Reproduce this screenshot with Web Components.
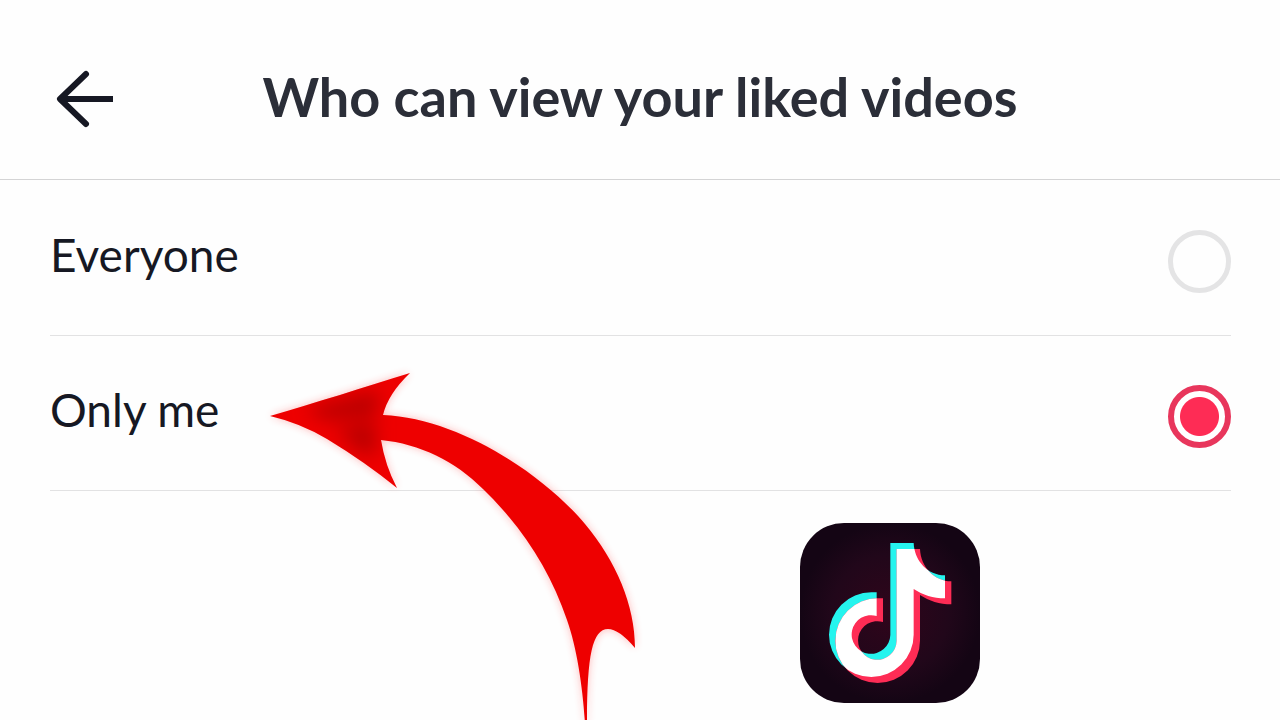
<!DOCTYPE html>
<html lang="en">
<head>
<meta charset="utf-8">
<meta name="viewport" content="width=device-width, initial-scale=1">
<title>Who can view your liked videos</title>
<style>
body { margin: 0; background: #fefefe; color: #161823; font-family: Lato, "Open Sans", sans-serif; }
</style>
</head>
<body>
<privacy-page></privacy-page>
<script>
const define = (name, html) => customElements.define(name, class extends HTMLElement {
  constructor() {
    super();
    this.attachShadow({ mode: 'open' }).innerHTML = html;
  }
});

define('page-header', `
  <style>
    :host { display: block; border-bottom: 1px solid #d4d4d5; }
    header { display: grid; grid-template-columns: 1fr auto 1fr; align-items: center; min-height: 179px; padding: 18px 50px 0; box-sizing: border-box; }
    button { width: 72px; height: 72px; padding: 0; border: 0; background: none; color: #161823; cursor: pointer; }
    svg { display: block; }
    h1 { margin: 0; padding-bottom: 4px; font-size: 54px; line-height: 64px; font-weight: 700; color: #2b2e38; }
  </style>
  <header>
    <button type="button" aria-label="Back">
      <svg width="72" height="72" viewBox="50 63 72 72" fill="none" stroke="currentColor" stroke-width="6" stroke-linecap="round" stroke-linejoin="round"><path d="M86 74 60 99 86 124"/><path d="M60 99H113" stroke-linecap="butt"/></svg>
    </button>
    <h1><slot></slot></h1>
  </header>`);

define('option-row', `
  <style>
    :host { display: flex; align-items: center; justify-content: space-between; box-sizing: border-box; min-height: 155px; padding-top: 6px; border-bottom: 1px solid #e2e2e3; }
  </style>
  <slot name="label"></slot>
  <slot name="control"></slot>`);

define('view-options', `
  <style>
    :host { display: block; padding: 1px 49px 0 50px; }
    fieldset { margin: 0; padding: 0; border: 0; min-width: 0; }
    label { flex: 1; padding-bottom: 12px; font-size: 46px; line-height: 56px; }
    input { appearance: none; flex: none; box-sizing: border-box; width: 63px; height: 63px; margin: 0; border: 5px solid #e4e4e5; border-radius: 50%; cursor: pointer; }
    input:checked { border: 6px solid #e8365c; background: radial-gradient(circle, #fe2c55 19px, #fff 20px); }
  </style>
  <fieldset aria-label="Who can view your liked videos">
    <option-row>
      <label slot="label" for="everyone">Everyone</label>
      <input slot="control" type="radio" name="audience" id="everyone" value="everyone">
    </option-row>
    <option-row>
      <label slot="label" for="only-me">Only me</label>
      <input slot="control" type="radio" name="audience" id="only-me" value="only-me" checked>
    </option-row>
  </fieldset>`);

define('app-logo', `
  <style>
    :host { display: block; width: 180px; }
    svg { display: block; width: 100%; }
  </style>
  <svg viewBox="60 38 540 540" role="img" aria-label="TikTok">
    <defs>
      <radialGradient id="bg"><stop offset="0" stop-color="#30051b"/><stop offset=".65" stop-color="#21071a"/><stop offset="1" stop-color="#140514"/></radialGradient>
      <path id="note" d="M331 98H401C403 151 443 195 495 195V264C460 264 428 254 401 236V373A127 127 0 1 1 274 246H290V317A58 58 0 1 0 331 374Z"/>
      <clipPath id="overlap"><use href="#note" x="19" y="18"/></clipPath>
    </defs>
    <rect x="60" y="38" width="540" height="540" rx="132" fill="url(#bg)"/>
    <use href="#note" fill="#25f4ee"/>
    <use href="#note" x="19" y="18" fill="#fe2c55"/>
    <g clip-path="url(#overlap)"><use href="#note" fill="#fff"/></g>
  </svg>`);

define('pointer-arrow', `
  <style>
    :host { display: block; pointer-events: none; }
    svg { display: block; }
  </style>
  <svg width="390" height="360" viewBox="260 360 390 360" aria-hidden="true">
    <defs>
      <filter id="glow" x="-10%" y="-10%" width="120%" height="120%"><feGaussianBlur stdDeviation="4"/></filter>
      <filter id="soft" x="-50%" y="-50%" width="200%" height="200%"><feGaussianBlur stdDeviation="9"/></filter>
      <path id="shape" d="M270 416C315 403 365 387 410 373Q388 394 383 415C460 418 545 476 585 524C616 561 635 605 635 648Q619 629 608 629C592 629 587 657 587 724H585C583 689 577 648 567 620C550 570 522 527 483 489C455 461 420 444 381 440Q385 465 397 488Q365 462 327 439Q300 423 270 416Z"/>
      <clipPath id="inside"><use href="#shape"/></clipPath>
    </defs>
    <use href="#shape" fill="#f22" opacity=".3" filter="url(#glow)"/>
    <use href="#shape" fill="#ee0000"/>
    <g clip-path="url(#inside)">
      <g fill="#a80000" filter="url(#soft)">
        <path d="M305 409 380 390 375 417 325 420Z" opacity=".75"/>
        <path d="M335 430 376 422 375 455 365 455Z" opacity=".75"/>
      </g>
    </g>
  </svg>`);

define('privacy-page', `
  <style>
    :host { display: block; position: relative; min-height: 100vh; overflow: hidden; }
    app-logo { margin: 32px 0 16px 62.5%; }
    pointer-arrow { position: absolute; left: 260px; top: 360px; }
  </style>
  <page-header>Who can view your liked videos</page-header>
  <main>
    <view-options></view-options>
    <app-logo></app-logo>
  </main>
  <pointer-arrow></pointer-arrow>`);
</script>
</body>
</html>
